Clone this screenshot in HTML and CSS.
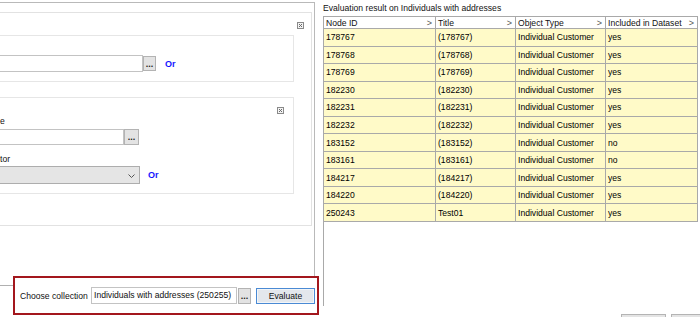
FILE: index.html
```html
<!DOCTYPE html>
<html>
<head>
<meta charset="utf-8">
<link rel="stylesheet" href="styles.css">
</head>
<body>
<div class="app">
  <div class="left">
    <div class="frame">
      <div class="section">
        <div class="sec-head">
          <svg class="close" width="7" height="7" viewBox="0 0 7 7"><rect x="0.5" y="0.5" width="6" height="6" fill="#f4f4f4" stroke="#8a8a8a"/><path d="M2 2L5 5M5 2L2 5" stroke="#6a6a6a" stroke-width="1"/></svg>
        </div>
        <div class="box box-a">
          <div class="row">
            <div class="input in-a"></div>
            <div class="dots dots-a">...</div>
            <span class="or or-a">Or</span>
          </div>
        </div>
        <div class="box box-b">
          <div class="box-head">
            <svg class="close" width="7" height="7" viewBox="0 0 7 7"><rect x="0.5" y="0.5" width="6" height="6" fill="#f4f4f4" stroke="#8a8a8a"/><path d="M2 2L5 5M5 2L2 5" stroke="#6a6a6a" stroke-width="1"/></svg>
          </div>
          <div class="label">e</div>
          <div class="row">
            <div class="input in-b"></div>
            <div class="dots dots-b">...</div>
          </div>
          <div class="label label-2">tor</div>
          <div class="row">
            <div class="select">
              <svg width="7" height="4" viewBox="0 0 7 4"><path d="M0.5 0.5L3.5 3.5L6.5 0.5" fill="none" stroke="#555" stroke-width="1"/></svg>
            </div>
            <span class="or or-b">Or</span>
          </div>
        </div>
      </div>
    </div>
  </div>

  <div class="right">
    <div class="title">Evaluation result on Individuals with addresses</div>
    <div class="grid">
      <div class="hc"><span>Node ID</span><span class="arr">&gt;</span></div>
      <div class="hc"><span>Title</span><span class="arr">&gt;</span></div>
      <div class="hc"><span>Object Type</span><span class="arr">&gt;</span></div>
      <div class="hc"><span>Included in Dataset</span><span class="arr">&gt;</span></div>

      <div class="c">178767</div><div class="c">(178767)</div><div class="c">Individual Customer</div><div class="c">yes</div>
      <div class="c">178768</div><div class="c">(178768)</div><div class="c">Individual Customer</div><div class="c">yes</div>
      <div class="c">178769</div><div class="c">(178769)</div><div class="c">Individual Customer</div><div class="c">yes</div>
      <div class="c">182230</div><div class="c">(182230)</div><div class="c">Individual Customer</div><div class="c">yes</div>
      <div class="c">182231</div><div class="c">(182231)</div><div class="c">Individual Customer</div><div class="c">yes</div>
      <div class="c">182232</div><div class="c">(182232)</div><div class="c">Individual Customer</div><div class="c">yes</div>
      <div class="c">183152</div><div class="c">(183152)</div><div class="c">Individual Customer</div><div class="c">no</div>
      <div class="c">183161</div><div class="c">(183161)</div><div class="c">Individual Customer</div><div class="c">no</div>
      <div class="c">184217</div><div class="c">(184217)</div><div class="c">Individual Customer</div><div class="c">yes</div>
      <div class="c">184220</div><div class="c">(184220)</div><div class="c">Individual Customer</div><div class="c">yes</div>
      <div class="c">250243</div><div class="c">Test01</div><div class="c">Individual Customer</div><div class="c">yes</div>
    </div>
    <div class="btns">
      <div class="btn b1"></div>
      <div class="btn b2"></div>
    </div>
  </div>

  <div class="highlight">
    <span class="coll-label">Choose collection</span>
    <div class="input coll">Individuals with addresses (250255)</div>
    <div class="dots dots-c">...</div>
    <div class="evaluate">Evaluate</div>
  </div>
</div>
</body>
</html>
```

FILE: styles.css
```css
body {
  margin: 0;
  background: #fff;
  font-family: "Liberation Sans", Arial, sans-serif;
  font-size: 8.6px;
  color: #111;
}

.app {
  position: relative;
  display: flex;
  width: 700px;
  height: 317px;
  overflow: hidden;
}

/* ---------- left editor pane ---------- */
.left {
  flex: none;
  width: 316px;
  height: 317px;
  overflow: hidden;
}

.frame {
  box-sizing: border-box;
  width: 345px;
  height: 284px;
  margin: 2px 0 0 -30px;
  padding: 9px 2px 0 0;
  border-top: 1px solid #b9b9b9;
  border-right: 1px solid #b9b9b9;
  border-bottom: 1px solid #b0b0b0;
}

.section {
  box-sizing: border-box;
  height: 214px;
  border: 1px solid #e2e2e2;
}

.sec-head {
  box-sizing: border-box;
  height: 22px;
  padding: 9px 7px 0 0;
  display: flex;
  justify-content: flex-end;
  align-items: flex-start;
}

.close {
  display: block;
}

.box {
  box-sizing: border-box;
  margin-right: 17px;
  border: 1px solid #e6e6e6;
}

.box-a {
  height: 47px;
  padding-top: 19px;
}

.box-b {
  height: 97px;
  margin-top: 15px;
}

.box-head {
  box-sizing: border-box;
  height: 16px;
  padding: 9px 9px 0 0;
  display: flex;
  justify-content: flex-end;
  align-items: flex-start;
}

.label {
  height: 14px;
  line-height: 14px;
  padding-left: 28px;
  color: #111;
}

.label-2 {
  margin-top: 7px;
}

.row {
  display: flex;
  align-items: center;
}

.input {
  box-sizing: border-box;
  flex: none;
  border: 1px solid #c3c3c3;
  background: #fff;
}

.in-a {
  width: 171px;
  height: 17px;
}

.in-b {
  width: 152px;
  height: 16px;
  margin-top: 1px;
}

.dots {
  box-sizing: border-box;
  flex: none;
  border: 1px solid #b3b3b3;
  background: #e3e3e3;
  color: #222;
  font-weight: bold;
  font-size: 9px;
  text-align: center;
  line-height: 15px;
}

.dots-a {
  width: 13px;
  height: 15px;
}

.dots-b {
  width: 15px;
  height: 16px;
  margin-top: 1px;
}

.select {
  box-sizing: border-box;
  flex: none;
  width: 168px;
  height: 18px;
  border: 1px solid #adadad;
  background: #e5e5e5;
  display: flex;
  justify-content: flex-end;
  align-items: center;
  padding: 1px 4px 0 0;
}

.select svg {
  display: block;
}

.or {
  color: #1414ff;
  font-weight: bold;
  font-size: 9px;
}

.or-a {
  margin-left: 9px;
}

.or-b {
  margin-left: 8px;
}

/* ---------- right result pane ---------- */
.right {
  flex: none;
  box-sizing: border-box;
  width: 384px;
  height: 317px;
  padding-left: 7px;
  display: flex;
  flex-direction: column;
  overflow: hidden;
}

.title {
  height: 18px;
  line-height: 16px;
  color: #111;
}

.grid {
  box-sizing: border-box;
  flex: none;
  width: 375px;
  height: 290px;
  border-top: 1px solid #a9a9a9;
  border-left: 1px solid #a9a9a9;
  display: grid;
  grid-template-columns: 112px 80px 90px 92px;
  grid-template-rows: 12px;
  grid-auto-rows: 17.55px;
  align-content: start;
  background: #fff;
}

.hc,
.c {
  box-sizing: border-box;
  border-right: 1px solid #a9a9a9;
  border-bottom: 1px solid #a9a9a9;
  display: flex;
  align-items: center;
  padding-left: 2px;
  white-space: nowrap;
  overflow: hidden;
}

.hc {
  background: #fff;
  justify-content: space-between;
  padding-right: 3px;
  color: #111;
}

.arr {
  color: #555;
  font-size: 9px;
}

.c {
  background: #fffac8;
  color: #000;
}

.btns {
  flex: none;
  display: flex;
  gap: 5px;
  margin-top: 8px;
  padding-left: 298px;
}

.btn {
  box-sizing: border-box;
  flex: none;
  height: 20px;
  border: 1px solid #b4b4b4;
  background: #e4e4e4;
}

.b1 {
  width: 45px;
}

.b2 {
  width: 40px;
}

/* ---------- highlighted bottom bar (overlay annotation) ---------- */
.highlight {
  position: absolute;
  left: 13px;
  top: 276px;
  box-sizing: border-box;
  width: 306px;
  height: 39px;
  border: 2px solid #a3171d;
  background: #fff;
  display: flex;
  align-items: center;
  padding-left: 5px;
}

.coll-label {
  flex: none;
  width: 71px;
  color: #111;
}

.coll {
  width: 146px;
  height: 17px;
  line-height: 15px;
  padding-left: 2px;
  color: #111;
  white-space: nowrap;
  overflow: hidden;
}

.dots-c {
  width: 13px;
  height: 16px;
  margin-left: 1px;
  line-height: 15px;
}

.evaluate {
  box-sizing: border-box;
  flex: none;
  width: 59px;
  height: 16px;
  margin-left: 5px;
  border: 1px solid #4a8ad4;
  background: #e3e7ec;
  box-shadow: inset 0 0 0 1px #f2f5f8;
  text-align: center;
  line-height: 14px;
  color: #111;
}
```
